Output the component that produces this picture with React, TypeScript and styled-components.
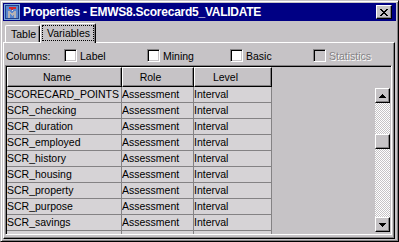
import React from "react";
import styled, { createGlobalStyle } from "styled-components";

const face = "#c6c3c6";
const shadow = "#848284";
const light = "#ffffff";
const dark = "#000000";
const cellBg = "#d6d3d6";

const GlobalStyle = createGlobalStyle`
  html, body {
    margin: 0;
    padding: 0;
    background: ${face};
  }
  body {
    font-family: "Liberation Sans", Arial, sans-serif;
    font-size: 10.5px;
    color: #000;
  }
`;

const Window = styled.div`
  width: 399px;
  height: 242px;
  box-sizing: border-box;
  display: flex;
  flex-direction: column;
  background: ${face};
  padding: 2px;
  border: 1px solid;
  border-color: ${face} ${dark} ${dark} ${face};
  box-shadow: inset 1px 1px ${light}, inset -1px -1px ${shadow};
`;

const TitleBar = styled.div`
  height: 18px;
  flex: none;
  display: flex;
  align-items: center;
  padding-left: 1px;
  background: #000084;
`;

const TitleText = styled.span`
  margin-left: 3px;
  color: #fff;
  font-weight: bold;
  font-size: 12px;
  letter-spacing: -0.25px;
  white-space: nowrap;
`;

const CloseButton = styled.div`
  margin-left: auto;
  margin-right: 4px;
  width: 16px;
  height: 14px;
  box-sizing: border-box;
  display: flex;
  align-items: center;
  justify-content: center;
  background: ${face};
  border: 1px solid;
  border-color: ${light} ${dark} ${dark} ${light};
  box-shadow: inset -1px -1px ${shadow};
`;

const Body = styled.div`
  flex: 1;
  display: flex;
  flex-direction: column;
  padding-right: 1px;
`;

const TabStrip = styled.div`
  height: 21px;
  flex: none;
  display: flex;
  align-items: flex-end;
  padding-left: 2px;
`;

const Tab = styled.div<{ $active?: boolean; $w: number }>`
  position: relative;
  z-index: ${(p) => (p.$active ? 1 : 0)};
  width: ${(p) => p.$w}px;
  height: ${(p) => (p.$active ? 20 : 17)}px;
  margin-bottom: ${(p) => (p.$active ? -1 : 0)}px;
  box-sizing: border-box;
  display: flex;
  align-items: ${(p) => (p.$active ? "stretch" : "center")};
  padding: ${(p) => (p.$active ? "1px 0 2px 1px" : "0 0 0 5px")};
  background: ${face};
  border-top: 1px solid ${light};
  border-left: 1px solid ${light};
  border-right: 1px solid ${dark};
  box-shadow: inset -1px 0 ${shadow};
  border-top-left-radius: 2px;
  border-top-right-radius: 2px;
  white-space: nowrap;
`;

const FocusLabel = styled.span`
  flex: 1;
  display: flex;
  align-items: center;
  padding-left: 4px;
  margin-right: 1px;
  border: 1px dotted #000;
`;

const Panel = styled.div`
  flex: 1;
  display: flex;
  flex-direction: column;
  padding: 0 2px 3px 1px;
  border-top: 1px solid ${light};
  border-left: 1px solid ${light};
  border-right: 1px solid ${dark};
  border-bottom: 1px solid ${dark};
  box-shadow: inset -1px -1px ${shadow};
`;

const OptionsRow = styled.div`
  height: 22px;
  box-sizing: border-box;
  padding: 3px 0 0 1px;
  display: grid;
  grid-template-columns: 58px repeat(4, 83px);
  align-items: center;
`;

const CheckGroup = styled.label<{ $disabled?: boolean }>`
  display: flex;
  align-items: center;
  gap: 3px;
  color: ${(p) => (p.$disabled ? shadow : "#000")};
  text-shadow: ${(p) => (p.$disabled ? `1px 1px ${light}` : "none")};
`;

const CheckBox = styled.span<{ $disabled?: boolean }>`
  width: 13px;
  height: 13px;
  box-sizing: border-box;
  flex: none;
  background: ${(p) => (p.$disabled ? face : light)};
  border: 1px solid;
  border-color: ${shadow} ${light} ${light} ${shadow};
  box-shadow: inset 1px 1px ${dark}, inset -1px -1px ${face};
`;

const ListView = styled.div`
  height: 170px;
  box-sizing: border-box;
  display: flex;
  overflow: hidden;
  padding: 1px;
  background: ${face};
  border: 1px solid;
  border-color: ${shadow} ${light} ${light} ${shadow};
  box-shadow: inset 1px 1px ${dark}, inset -1px -1px ${face};
`;

const Grid = styled.div`
  flex: none;
  display: flex;
  flex-direction: column;
`;

const HeaderRow = styled.div`
  display: flex;
  height: 20px;
  flex: none;
`;

const HeaderCell = styled.div<{ $w: number }>`
  width: ${(p) => p.$w}px;
  box-sizing: border-box;
  display: flex;
  align-items: center;
  justify-content: center;
  padding-right: 15px;
  background: ${face};
  border: 1px solid;
  border-color: ${light} ${dark} ${dark} ${light};
  box-shadow: inset -1px -1px ${shadow};
`;

const Row = styled.div`
  display: flex;
  height: 16px;
  flex: none;
`;

const Cell = styled.div<{ $w: number }>`
  width: ${(p) => p.$w}px;
  box-sizing: border-box;
  background: ${cellBg};
  border-right: 1px solid ${shadow};
  border-bottom: 1px solid ${shadow};
  line-height: 15px;
  white-space: nowrap;
  overflow: hidden;
`;

const Spacer = styled.div`
  flex: 1;
`;

const ScrollBar = styled.div`
  width: 15px;
  flex: none;
  display: flex;
  flex-direction: column;
  padding: 21px 0 1px;
`;

const ScrollButton = styled.div`
  width: 15px;
  height: 15px;
  box-sizing: border-box;
  flex: none;
  display: flex;
  align-items: center;
  justify-content: center;
  background: ${face};
  border: 1px solid;
  border-color: ${light} ${dark} ${dark} ${light};
  box-shadow: inset -1px -1px ${shadow};
`;

const Track = styled.div<{ $h?: number }>`
  flex: ${(p) => (p.$h ? "none" : "1")};
  height: ${(p) => (p.$h ? `${p.$h}px` : "auto")};
  background: repeating-conic-gradient(${light} 0 25%, ${face} 0 50%) 0 0 / 2px 2px;
`;

const columns = [
  { title: "Name", width: 115 },
  { title: "Role", width: 72 },
  { title: "Level", width: 78 },
];

const rows = [
  "SCORECARD_POINTS",
  "SCR_checking",
  "SCR_duration",
  "SCR_employed",
  "SCR_history",
  "SCR_housing",
  "SCR_property",
  "SCR_purpose",
  "SCR_savings",
];

const AppIcon: React.FC = () => (
  <svg width="16" height="16" viewBox="0 0 16 16" shapeRendering="crispEdges">
    <rect x="0" y="0" width="16" height="16" fill="#7ba6de" />
    <rect x="1" y="1" width="14" height="14" fill="#21418c" />
    <rect x="2" y="2" width="12" height="12" fill="#5a86ce" />
    <path d="M5 3h7v2H9v1H7V5H5z" fill="#d62828" />
    <path d="M4 7h2l2 3 2-3h2v7h-2v-4l-2 2-2-2v4H4z" fill="#b5b2b5" />
    <path d="M8 6h1v1H8z" fill="#e7e7e7" />
  </svg>
);

const CloseGlyph: React.FC = () => (
  <svg width="8" height="7" viewBox="0 0 8 7" shapeRendering="crispEdges">
    <path d="M0 0h2v1h1v1h2V1h1V0h2v1H7v1H6v1H5v1h1v1h1v1h1v1H6V6H5V5H3v1H2v1H0V6h1V5h1V4h1V3H2V2H1V1H0z" fill="#000" />
  </svg>
);

const Arrow: React.FC<{ down?: boolean }> = ({ down }) => (
  <svg
    width="7"
    height="4"
    viewBox="0 0 7 4"
    shapeRendering="crispEdges"
    style={{ transform: down ? "scaleY(-1)" : undefined }}
  >
    <rect x="3" y="0" width="1" height="1" />
    <rect x="2" y="1" width="3" height="1" />
    <rect x="1" y="2" width="5" height="1" />
    <rect x="0" y="3" width="7" height="1" />
  </svg>
);

const Option: React.FC<{ label: string; disabled?: boolean }> = ({ label, disabled }) => (
  <CheckGroup $disabled={disabled}>
    <CheckBox $disabled={disabled} />
    {label}
  </CheckGroup>
);

export default function App() {
  return (
    <>
      <GlobalStyle />
      <Window>
        <TitleBar>
          <AppIcon />
          <TitleText>Properties - EMWS8.Scorecard5_VALIDATE</TitleText>
          <CloseButton>
            <CloseGlyph />
          </CloseButton>
        </TitleBar>
        <Body>
          <TabStrip>
            <Tab $w={35}>Table</Tab>
            <Tab $w={56} $active>
              <FocusLabel>Variables</FocusLabel>
            </Tab>
          </TabStrip>
          <Panel>
            <OptionsRow>
              <span>Columns:</span>
              <Option label="Label" />
              <Option label="Mining" />
              <Option label="Basic" />
              <Option label="Statistics" disabled />
            </OptionsRow>
            <ListView>
              <Grid>
                <HeaderRow>
                  {columns.map((c) => (
                    <HeaderCell key={c.title} $w={c.width}>
                      {c.title}
                    </HeaderCell>
                  ))}
                </HeaderRow>
                {rows.map((name) => (
                  <Row key={name}>
                    <Cell $w={columns[0].width}>{name}</Cell>
                    <Cell $w={columns[1].width}>Assessment</Cell>
                    <Cell $w={columns[2].width}>Interval</Cell>
                  </Row>
                ))}
                {/* next row, scrolled out of view but for its top edge */}
                <Row>
                  {columns.map((c) => (
                    <Cell key={c.title} $w={c.width} />
                  ))}
                </Row>
              </Grid>
              <Spacer />
              <ScrollBar>
                <ScrollButton>
                  <Arrow />
                </ScrollButton>
                <Track $h={31} />
                <ScrollButton />
                <Track />
                <ScrollButton>
                  <Arrow down />
                </ScrollButton>
              </ScrollBar>
            </ListView>
          </Panel>
        </Body>
      </Window>
    </>
  );
}
